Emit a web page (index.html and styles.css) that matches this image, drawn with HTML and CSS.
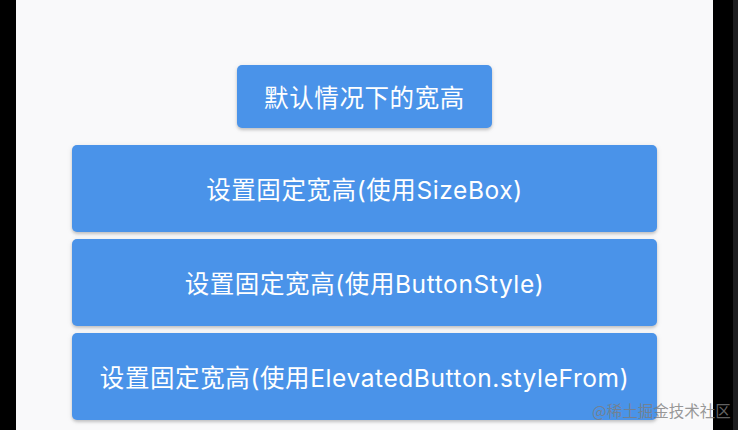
FILE: index.html
```html
<!DOCTYPE html>
<html lang="zh-CN">
<head>
<meta charset="utf-8">
<title>按钮宽高</title>
<link rel="stylesheet" href="styles.css">
</head>
<body>
  <div class="frame">
    <div class="edge edge-left"></div>
    <main class="screen">
      <button class="btn btn-default">默认情况下的宽高</button>
      <div class="stack">
        <button class="btn btn-wide">设置固定宽高(使用SizeBox)</button>
        <button class="btn btn-wide">设置固定宽高(使用ButtonStyle)</button>
        <button class="btn btn-wide">设置固定宽高(使用ElevatedButton.styleFrom)</button>
      </div>
    </main>
    <div class="edge edge-right"><span class="edge-line"></span></div>
    <div class="watermark">@稀土掘金技术社区</div>
  </div>
</body>
</html>
```

FILE: styles.css
```css
html, body {
  margin: 0;
  padding: 0;
  width: 738px;
  height: 430px;
  overflow: hidden;
  background: #000;
}

.frame {
  position: relative;
  display: flex;
  width: 738px;
  height: 430px;
}

.edge {
  background: #000;
}

.edge-left {
  width: 16px;
}

.edge-right {
  width: 25px;
  display: flex;
  justify-content: flex-end;
}

.edge-line {
  width: 5px;
  background: #1d1d1f;
}

.screen {
  flex: 1;
  background: #f9f9fa;
  display: flex;
  flex-direction: column;
  align-items: center;
  padding-top: 65px;
  box-sizing: border-box;
}

.btn {
  border: none;
  margin: 0;
  padding: 0;
  background: #4a93e9;
  color: #fff;
  font-family: "Inter", "Noto Sans CJK SC", sans-serif;
  font-size: 24.5px;
  font-weight: 400;
  letter-spacing: 0.6px;
  border-radius: 5px;
  box-shadow: 0 2px 3px rgba(0, 0, 0, 0.18), 0 1px 6px rgba(0, 0, 0, 0.08);
  display: flex;
  align-items: center;
  justify-content: center;
  white-space: nowrap;
}

.btn-default {
  width: 255px;
  height: 63px;
}

.stack {
  margin-top: 17px;
  display: flex;
  flex-direction: column;
  gap: 7px;
}

.btn-wide {
  width: 585px;
  height: 87px;
}

.watermark {
  position: absolute;
  left: 592px;
  top: 400px;
  font-family: "Noto Sans CJK SC", sans-serif;
  font-size: 15.5px;
  line-height: 20px;
  color: rgba(125, 125, 125, 0.8);
}
```
